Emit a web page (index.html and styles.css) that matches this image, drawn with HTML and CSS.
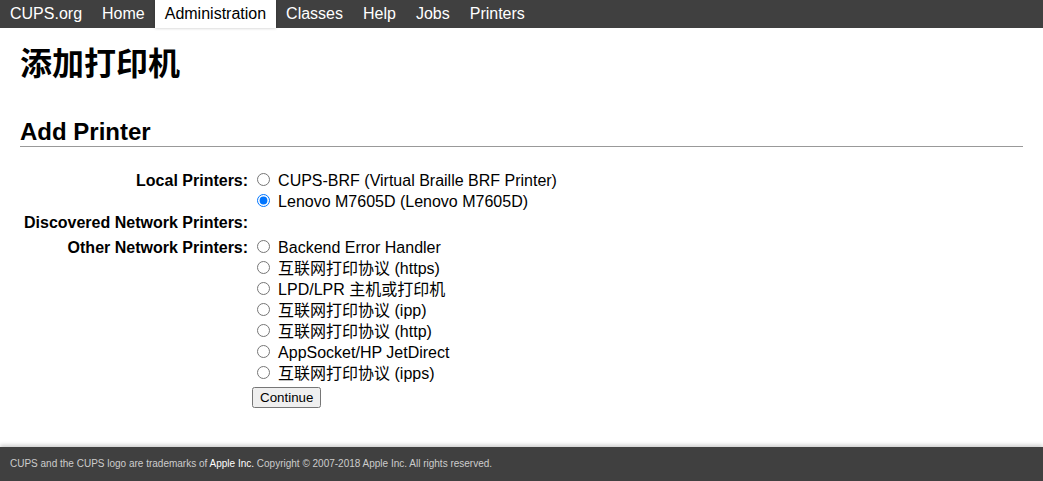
FILE: index.html
```html
<!DOCTYPE html>
<html lang="zh-CN">
<head>
  <meta charset="UTF-8">
  <meta name="viewport" content="width=device-width, initial-scale=1.0">
  <title>添加打印机 - CUPS</title>
  <link rel="stylesheet" href="styles.css">
</head>
<body>
  <div class="header">
    <a href="#">CUPS.org</a>
    <a href="#">Home</a>
    <a href="#" class="active">Administration</a>
    <a href="#">Classes</a>
    <a href="#">Help</a>
    <a href="#">Jobs</a>
    <a href="#">Printers</a>
  </div>

  <div class="body">
    <h1>添加打印机</h1>
    <h2 class="title">Add Printer</h2>

    <form>
      <table class="devices">
        <tr>
          <th class="label">Local Printers:</th>
          <td>
            <label class="choice"><input type="radio" name="DEVICE_URI" value="cups-brf:/">CUPS-BRF (Virtual Braille BRF Printer)</label>
            <label class="choice"><input type="radio" name="DEVICE_URI" value="usb://Lenovo/M7605D" checked>Lenovo M7605D (Lenovo M7605D)</label>
          </td>
        </tr>
        <tr class="discovered">
          <th class="label">Discovered Network Printers:</th>
          <td></td>
        </tr>
        <tr>
          <th class="label">Other Network Printers:</th>
          <td>
            <label class="choice"><input type="radio" name="DEVICE_URI" value="beh">Backend Error Handler</label>
            <label class="choice"><input type="radio" name="DEVICE_URI" value="https">互联网打印协议 (https)</label>
            <label class="choice"><input type="radio" name="DEVICE_URI" value="lpd">LPD/LPR 主机或打印机</label>
            <label class="choice"><input type="radio" name="DEVICE_URI" value="ipp">互联网打印协议 (ipp)</label>
            <label class="choice"><input type="radio" name="DEVICE_URI" value="http">互联网打印协议 (http)</label>
            <label class="choice"><input type="radio" name="DEVICE_URI" value="socket">AppSocket/HP JetDirect</label>
            <label class="choice"><input type="radio" name="DEVICE_URI" value="ipps">互联网打印协议 (ipps)</label>
          </td>
        </tr>
        <tr>
          <td></td>
          <td class="submit"><input type="submit" value="Continue"></td>
        </tr>
      </table>
    </form>
  </div>

  <div class="footer">CUPS and the CUPS logo are trademarks of <a href="#">Apple Inc.</a> Copyright &copy; 2007-2018 Apple Inc. All rights reserved.</div>
</body>
</html>
```

FILE: styles.css
```css
html, body {
  margin: 0;
  padding: 0;
}

body {
  display: flex;
  flex-direction: column;
  min-height: 100vh;
  background: #fff;
  color: #000;
  font-family: "Liberation Sans", Arial, "Noto Sans CJK SC", sans-serif;
  font-size: 16px;
}

.header {
  display: flex;
  height: 28px;
  background: #404040;
}

.header a {
  padding: 0 10px;
  line-height: 28px;
  color: #fff;
  text-decoration: none;
}

.header a.active {
  background: #fff;
  color: #000;
  box-shadow: 0 0 3px rgba(0, 0, 0, 0.25);
}

.body {
  padding: 0 20px;
}

h1 {
  margin: 16px 0 0;
  font-size: 32px;
  line-height: 40px;
  font-weight: bold;
}

h2.title {
  margin: 34px 0 0;
  font-size: 24px;
  line-height: 28px;
  font-weight: bold;
  border-bottom: 1px solid #999;
}

form {
  margin: 0;
}

table.devices {
  margin-top: 23px;
  border-collapse: collapse;
}

table.devices th,
table.devices td {
  padding: 0;
  vertical-align: top;
  line-height: 21px;
}

th.label {
  padding: 0 4px !important;
  text-align: right;
  white-space: nowrap;
}

tr.discovered th {
  padding-bottom: 4px !important;
}

.choice {
  display: block;
  height: 21px;
  white-space: nowrap;
}

.choice input {
  margin: 3px 8px 0 5px;
}

td.submit {
  padding-top: 2px !important;
}

td.submit input {
  font-family: "Liberation Sans", Arial, sans-serif;
  font-size: 13.33px;
}

.footer {
  margin-top: auto;
  height: 34px;
  padding: 0 10px;
  line-height: 34px;
  background: #404040;
  box-shadow: 0 -2px 4px rgba(0, 0, 0, 0.2);
  color: #ccc;
  font-size: 10px;
}

.footer a {
  color: #fff;
  text-decoration: none;
}
```
